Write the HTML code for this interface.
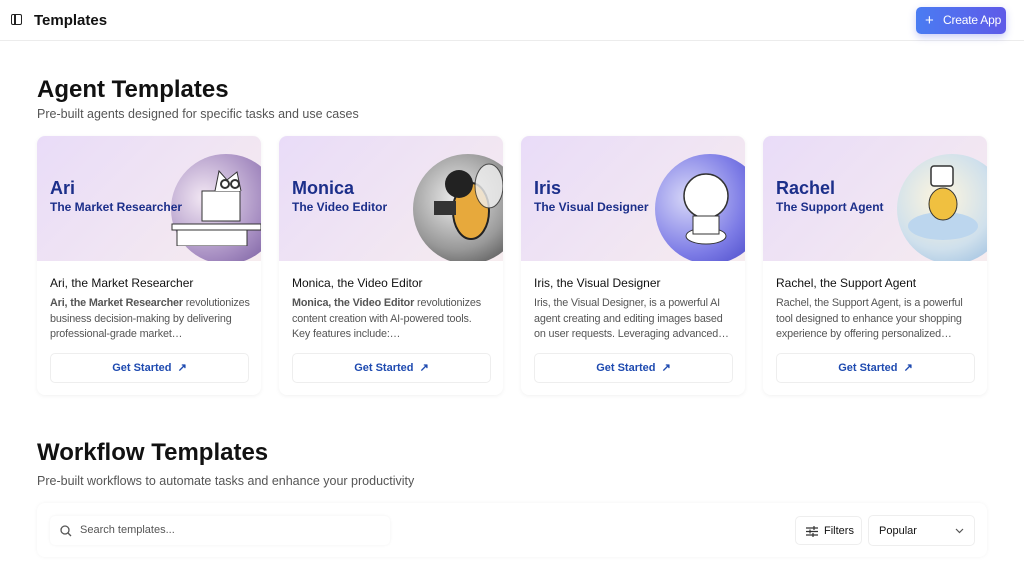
<!DOCTYPE html>
<html><head><meta charset="utf-8"><style>
*{box-sizing:border-box;margin:0;padding:0}
body{width:1024px;height:575px;overflow:hidden;background:#fff;font-family:"Liberation Sans",sans-serif;color:#111}
.hdr{height:41px;border-bottom:1px solid #ececec;position:relative}
.hdr .t{position:absolute;left:34px;top:12px;font-size:15px;font-weight:bold}
.hdr .ic{position:absolute;left:11px;top:14px;width:11px;height:11px;border:1.5px solid #222;border-radius:2px}
.hdr .ic:after{content:"";position:absolute;left:2px;top:0;bottom:0;width:1.5px;background:#222}
.btn{position:absolute;left:916px;top:7px;width:90px;height:27px;border-radius:5px;background:linear-gradient(90deg,#4a7cf2,#5f5ae8);color:#fff;font-size:12px;line-height:27px;box-shadow:0 3px 8px rgba(80,90,230,.3);white-space:nowrap}
.btn span{position:absolute;left:9px;top:0;font-size:15px}
.btn b{font-weight:normal;position:absolute;left:27px;letter-spacing:-0.2px}
h1{position:absolute;left:37px;font-size:24px;font-weight:bold}
.sub{position:absolute;left:37px;font-size:12.5px;color:#555}
.card{position:absolute;top:136px;width:224px;height:259px;border-radius:8px;box-shadow:0 1px 4px rgba(0,0,0,.06);background:#fff;overflow:hidden}
.img{height:125px;background:linear-gradient(135deg,#e9dcf8,#f6ecef);position:relative;overflow:hidden}
.img .n{position:absolute;left:13px;top:42px;font-size:18px;font-weight:bold;color:#1c2f8a}
.img .r{position:absolute;left:13px;top:64px;font-size:12px;font-weight:bold;color:#1c2f8a}
.circ{position:absolute;right:-20px;top:18px;width:110px;height:110px;border-radius:50%}
.ct{position:absolute;left:13px;top:140px;font-size:12px;color:#111}
.cd{position:absolute;left:13px;top:160px;width:200px;font-size:10.8px;line-height:15.5px;color:#555;letter-spacing:-0.15px;height:47px;overflow:hidden}
.cd b{color:#555}
.gs{position:absolute;left:13px;right:12px;top:217px;height:30px;border:1px solid #eee;border-radius:5px;text-align:center;font-size:11px;font-weight:bold;color:#1e4ab0;line-height:29px}
.bar{position:absolute;left:37px;top:503px;width:950px;height:54px;border-radius:8px;box-shadow:0 0 4px rgba(0,0,0,.05)}
.srch{position:absolute;left:13px;top:13px;width:340px;height:29px;border-radius:5px;box-shadow:0 0 3px rgba(0,0,0,.06);font-size:11px;color:#555;line-height:29px;padding-left:30px}
.flt{position:absolute;left:758px;top:13px;width:67px;height:29px;border:1px solid #eee;border-radius:5px;font-size:11px;line-height:28px;padding-left:28px}
.pop{position:absolute;left:831px;top:12px;width:107px;height:31px;border:1px solid #eee;border-radius:5px;font-size:11px;line-height:30px;padding-left:10px}
</style></head><body>
<div class="hdr"><div class="ic"></div><div class="t">Templates</div>
<div class="btn"><span>+</span><b>Create App</b></div></div>
<h1 style="top:76px">Agent Templates</h1>
<div class="sub" style="top:107px">Pre-built agents designed for specific tasks and use cases</div>

<div class="card" style="left:37px"><div class="img"><div class="circ" style="background:radial-gradient(circle at 30% 40%,#f3e8f4,#a48bc0 60%,#6a4f95)"></div>
<svg style="position:absolute;left:130px;top:30px" width="94" height="80"><rect x="35" y="25" width="38" height="30" fill="#fff" stroke="#333"/><rect x="5" y="58" width="89" height="6" fill="#fff" stroke="#333"/><rect x="10" y="64" width="70" height="16" fill="#fff" stroke="#333"/><path d="M48 25 L52 5 L60 14 L70 6 L74 25" fill="#fff" stroke="#333"/><circle cx="58" cy="18" r="4" fill="none" stroke="#333" stroke-width="2"/><circle cx="68" cy="18" r="4" fill="none" stroke="#333" stroke-width="2"/></svg>
<div class="n">Ari</div><div class="r">The Market Researcher</div></div>
<div class="ct">Ari, the Market Researcher</div>
<div class="cd"><b>Ari, the Market Researcher</b> revolutionizes business decision-making by delivering professional-grade market…</div>
<div class="gs">Get Started &nbsp;↗</div></div>

<div class="card" style="left:279px"><div class="img"><div class="circ" style="background:radial-gradient(circle at 40% 40%,#eee,#999 55%,#333)"></div>
<svg style="position:absolute;left:150px;top:20px" width="74" height="100"><ellipse cx="42" cy="55" rx="18" ry="28" fill="#e7a93c" stroke="#222" stroke-width="2"/><circle cx="30" cy="28" r="14" fill="#222"/><ellipse cx="60" cy="30" rx="14" ry="22" fill="#f0f0f0" stroke="#333" opacity=".8"/><rect x="5" y="45" width="22" height="14" fill="#333"/></svg>
<div class="n">Monica</div><div class="r">The Video Editor</div></div>
<div class="ct">Monica, the Video Editor</div>
<div class="cd"><b>Monica, the Video Editor</b> revolutionizes content creation with AI-powered tools. Key features include:…</div>
<div class="gs">Get Started &nbsp;↗</div></div>

<div class="card" style="left:521px"><div class="img"><div class="circ" style="background:radial-gradient(circle at 30% 40%,#d8d8f8,#7d7ce6 55%,#3b3bc0)"></div>
<svg style="position:absolute;left:150px;top:25px" width="74" height="100"><circle cx="35" cy="35" r="22" fill="#fff" stroke="#333" stroke-width="1.5"/><ellipse cx="35" cy="75" rx="20" ry="8" fill="#fff" stroke="#333"/><rect x="22" y="55" width="26" height="18" fill="#fff" stroke="#333"/></svg>
<div class="n">Iris</div><div class="r">The Visual Designer</div></div>
<div class="ct">Iris, the Visual Designer</div>
<div class="cd">Iris, the Visual Designer, is a powerful AI agent creating and editing images based on user requests. Leveraging advanced…</div>
<div class="gs">Get Started &nbsp;↗</div></div>

<div class="card" style="left:763px"><div class="img"><div class="circ" style="background:radial-gradient(circle at 40% 40%,#fff6de,#cfe0ec 55%,#88b2dc)"></div>
<svg style="position:absolute;left:140px;top:20px" width="84" height="100"><ellipse cx="40" cy="70" rx="35" ry="14" fill="#bcd6ee"/><rect x="28" y="10" width="22" height="20" rx="3" fill="#fff" stroke="#333" stroke-width="1.5"/><ellipse cx="40" cy="48" rx="14" ry="16" fill="#f0c040" stroke="#333"/></svg>
<div class="n">Rachel</div><div class="r">The Support Agent</div></div>
<div class="ct">Rachel, the Support Agent</div>
<div class="cd">Rachel, the Support Agent, is a powerful tool designed to enhance your shopping experience by offering personalized…</div>
<div class="gs">Get Started &nbsp;↗</div></div>

<h1 style="top:439px">Workflow Templates</h1>
<div class="sub" style="top:474px">Pre-built workflows to automate tasks and enhance your productivity</div>
<div class="bar">
<div class="srch"><svg style="position:absolute;left:10px;top:9px" width="12" height="12"><circle cx="5" cy="5" r="4" fill="none" stroke="#555" stroke-width="1.3"/><path d="M8 8L11 11" stroke="#555" stroke-width="1.3"/></svg>Search templates...</div>
<div class="flt"><svg style="position:absolute;left:10px;top:9px" width="12" height="11"><path d="M0 2H12M0 5.5H12M0 9H12" stroke="#333" stroke-width="1.2"/><path d="M8 0V4M4 3.5V7.5M7 7V11" stroke="#333" stroke-width="1.2"/></svg>Filters</div>
<div class="pop">Popular<svg style="position:absolute;right:10px;top:12px" width="9" height="6"><path d="M1 1L4.5 4.5L8 1" fill="none" stroke="#555" stroke-width="1.2"/></svg></div>
</div>
</body></html>
